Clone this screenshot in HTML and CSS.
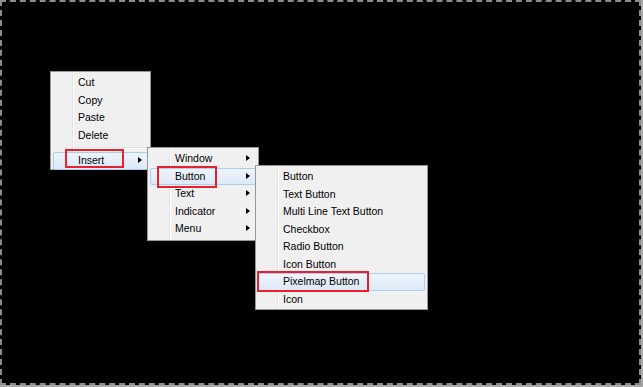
FILE: index.html
```html
<!DOCTYPE html>
<html lang="en">
<head>
    <meta charset="UTF-8">
    <title>Context Menu</title>
    <link rel="stylesheet" href="styles.css">
</head>
<body>
    <div class="frame">
        <div class="screen">
            <div class="menu menu-main">
                <div class="item">Cut</div>
                <div class="item">Copy</div>
                <div class="item">Paste</div>
                <div class="item">Delete</div>
                <div class="separator"></div>
                <div class="item active sub">Insert</div>
            </div>
            <div class="menu menu-insert">
                <div class="item sub">Window</div>
                <div class="item active sub">Button</div>
                <div class="item sub">Text</div>
                <div class="item sub">Indicator</div>
                <div class="item sub">Menu</div>
            </div>
            <div class="menu menu-button">
                <div class="item">Button</div>
                <div class="item">Text Button</div>
                <div class="item">Multi Line Text Button</div>
                <div class="item">Checkbox</div>
                <div class="item">Radio Button</div>
                <div class="item">Icon Button</div>
                <div class="item active">Pixelmap Button</div>
                <div class="item">Icon</div>
            </div>
            <div class="mark mark-insert"></div>
            <div class="mark mark-button"></div>
            <div class="mark mark-pixelmap"></div>
        </div>
    </div>
</body>
</html>
```

FILE: styles.css
```css
body {
    margin: 0;
    padding: 0;
    background: #fff;
    font-family: "Liberation Sans", Arial, sans-serif;
}
.frame {
    width: 641px;
    height: 385px;
    border-right: 2px solid #a8a8a8;
    border-bottom: 2px solid #a8a8a8;
}
.screen {
    position: relative;
    width: 637px;
    height: 381px;
    border: 2px dashed #8c8c8c;
    background: #000;
    overflow: hidden;
}
.menu {
    position: absolute;
    box-sizing: border-box;
    background: #f0f0f0;
    border: 1px solid #979797;
    padding: 2px;
    font-size: 10.5px;
    color: #000;
    background-image: linear-gradient(to right, transparent 21px, #e2e3e3 21px, #e2e3e3 22px, #fff 22px, #fff 23px, transparent 23px);
}
.menu-main {
    left: 48px;
    top: 69px;
    width: 101px;
    height: 99px;
}
.menu-insert {
    left: 145px;
    top: 145px;
    width: 112px;
    height: 94px;
}
.menu-button {
    left: 253px;
    top: 163px;
    width: 173px;
    height: 145px;
}
.item {
    position: relative;
    height: 17.5px;
    line-height: 17px;
    padding-left: 25px;
    box-sizing: border-box;
    white-space: nowrap;
}
.item.active {
    background: linear-gradient(#eef4fc, #dde9f7);
    border: 1px solid #aeccef;
    border-radius: 2px;
    line-height: 14.5px;
    padding-left: 24px;
}
.item.sub::after {
    content: "";
    position: absolute;
    right: 6px;
    top: 5px;
    border-left: 4px solid #000;
    border-top: 3.5px solid transparent;
    border-bottom: 3.5px solid transparent;
}
.item.active.sub::after {
    right: 5px;
    top: 4px;
}
.separator {
    height: 1px;
    margin: 3px 0 3px 23px;
    background: #e0e0e0;
    border-bottom: 1px solid #fff;
}
.mark {
    position: absolute;
    box-sizing: border-box;
    border: 2px solid #e8222a;
}
.mark-insert {
    left: 63px;
    top: 147px;
    width: 59px;
    height: 19px;
}
.mark-button {
    left: 155px;
    top: 164px;
    width: 60px;
    height: 22px;
}
.mark-pixelmap {
    left: 255px;
    top: 269px;
    width: 112px;
    height: 21px;
}
```
